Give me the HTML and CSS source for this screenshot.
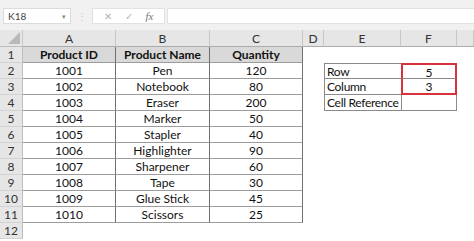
FILE: index.html
```html
<!DOCTYPE html>
<html lang="en">
<head>
    <meta charset="UTF-8">
    <meta name="viewport" content="width=device-width, initial-scale=1.0">
    <title>Sheet</title>
    <link rel="stylesheet" href="styles.css">
</head>
<body>
    <div class="toolbar">
        <div class="name-box">
            <span>K18</span>
            <span class="arrow">&#9662;</span>
        </div>
        <span class="dots">&#8942;</span>
        <div class="fx-buttons">
            <span class="btn">&#10005;</span>
            <span class="btn">&#10003;</span>
            <span class="btn fx">fx</span>
        </div>
        <div class="formula"></div>
    </div>
    <div class="sheet" id="sheet">
        <!-- cells are added with JavaScript below -->
    </div>

    <script>
        // product table, columns A to C
        const products = [
            ['1001', 'Pen', 120],
            ['1002', 'Notebook', 80],
            ['1003', 'Eraser', 200],
            ['1004', 'Marker', 50],
            ['1005', 'Stapler', 40],
            ['1006', 'Highlighter', 90],
            ['1007', 'Sharpener', 60],
            ['1008', 'Tape', 30],
            ['1009', 'Glue Stick', 45],
            ['1010', 'Scissors', 25]
        ];

        // lookup box in E2:F4
        const lookup = [
            ['Row', 5],
            ['Column', 3],
            ['Cell Reference', '']
        ];

        const sheet = document.getElementById('sheet');

        function cell(cls, text) {
            const div = document.createElement('div');
            div.className = cls;
            div.textContent = text;
            sheet.appendChild(div);
        }

        // header row
        cell('corner', '');
        ['A', 'B', 'C', 'D', 'E', 'F', ''].forEach(letter => cell('ch', letter));

        for (let r = 1; r <= 12; r++) {
            cell('rh', r);

            if (r === 1) {
                cell('t th', 'Product ID');
                cell('t th', 'Product Name');
                cell('t th', 'Quantity');
            } else if (r <= 11) {
                const p = products[r - 2];
                cell('t', p[0]);
                cell('t', p[1]);
                cell('t', p[2]);
            } else {
                cell('c', '');
                cell('c', '');
                cell('c', '');
            }

            cell('c', '');

            if (r >= 2 && r <= 4) {
                const item = lookup[r - 2];
                const first = r === 2 ? ' first' : '';
                let sel = '';
                if (r === 2) sel = ' sel-top';
                if (r === 3) sel = ' sel-bottom';
                cell('e' + first, item[0]);
                cell('f' + first + sel, item[1]);
            } else {
                cell('c', '');
                cell('c', '');
            }

            cell('c', '');
        }
    </script>
</body>
</html>
```

FILE: styles.css
```css
body {
    margin: 0;
    width: 474px;
    height: 241px;
    overflow: hidden;
    background-color: #fff;
    font-family: Lato, 'Liberation Sans', sans-serif;
    color: #111;
}

/* formula bar */
.toolbar {
    height: 30px;
    box-sizing: border-box;
    padding: 8px 0 6px 3px;
    background-color: #f1f1f1;
    display: flex;
    align-items: stretch;
}
.name-box {
    width: 68px;
    box-sizing: border-box;
    background-color: #fff;
    border: 1px solid #dcdcdc;
    display: flex;
    justify-content: space-between;
    align-items: center;
    padding: 0 4px 0 4px;
    font-size: 10px;
    color: #444;
}
.name-box .arrow {
    font-size: 7px;
    color: #888;
}
.dots {
    width: 21px;
    text-align: center;
    color: #c4c4c4;
    font-size: 10px;
    line-height: 16px;
}
.fx-buttons {
    width: 73px;
    box-sizing: border-box;
    background-color: #fff;
    border: 1px solid #e2e2e2;
    display: flex;
    justify-content: space-around;
    align-items: center;
    padding: 0 4px;
    color: #b3b3b3;
    font-size: 10px;
}
.fx-buttons .fx {
    font-family: 'Liberation Serif', serif;
    font-style: italic;
    font-size: 11px;
    color: #777;
}
.formula {
    flex: 1;
    margin-left: 2px;
    background-color: #fff;
    border: 1px solid #e2e2e2;
    border-right: none;
}

/* grid */
.sheet {
    display: grid;
    grid-template-columns: 23px 93px 94px 93px 21px 77px 56px 17px;
    grid-template-rows: 17px repeat(12, 16px);
    font-size: 12px;
}
.sheet > div {
    box-sizing: border-box;
    line-height: 15px;
    white-space: nowrap;
    overflow: hidden;
}
.corner {
    background-color: #e6e6e6;
    border-right: 1px solid #c8c8c8;
    border-bottom: 1px solid #bdbdbd;
    position: relative;
}
.corner::after {
    content: '';
    position: absolute;
    right: 2px;
    bottom: 2px;
    border-left: 12px solid transparent;
    border-bottom: 12px solid #b9b9b9;
}
.ch {
    background-color: #e6e6e6;
    border-right: 1px solid #c8c8c8;
    border-bottom: 1px solid #ababab;
    text-align: center;
    color: #333;
    line-height: 17px !important;
}
.rh {
    background-color: #e6e6e6;
    border-right: 1px solid #bdbdbd;
    border-bottom: 1px solid #d2d2d2;
    text-align: center;
    color: #333;
}
.t {
    text-align: center;
    border-right: 1px solid #6f6f6f;
    border-bottom: 1px solid #9c9c9c;
}
.th {
    font-weight: bold;
    background-color: #d9d9d9;
}
.e {
    padding-left: 2px;
    letter-spacing: -0.3px;
    border-left: 1px solid #8a8a8a;
    border-bottom: 1px solid #8a8a8a;
}
.f {
    text-align: center;
    border-left: 1px solid #8a8a8a;
    border-right: 1px solid #8a8a8a;
    border-bottom: 1px solid #8a8a8a;
}
.first {
    border-top: 1px solid #8a8a8a;
}
.sel-top {
    border: 2px solid #d8333a;
    border-bottom: 1px solid #8a8a8a;
}
.sel-bottom {
    border: 2px solid #d8333a;
    border-top: none;
}
```
